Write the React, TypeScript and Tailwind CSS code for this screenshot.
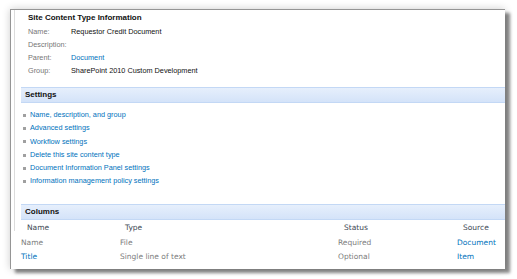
const font = "font-['Liberation_Sans',Arial,sans-serif]";
const tableFont = "font-['DejaVu_Sans',Verdana,sans-serif]";

const info = [
  { label: "Name:", value: "Requestor Credit Document" },
  { label: "Description:", value: "" },
  { label: "Parent:", value: "Document", link: true },
  { label: "Group:", value: "SharePoint 2010 Custom Development" },
];

const settings = [
  "Name, description, and group",
  "Advanced settings",
  "Workflow settings",
  "Delete this site content type",
  "Document Information Panel settings",
  "Information management policy settings",
];

const columns = [
  { name: "Name", nameLink: false, type: "File", status: "Required", source: "Document" },
  { name: "Title", nameLink: true, type: "Single line of text", status: "Optional", source: "Item" },
];

function Band({ title }: { title: string }) {
  return (
    <div className="h-[16px] flex items-center pl-[4px] border-y border-[#c3d8f5] bg-gradient-to-b from-[#e6effc] to-[#d4e3f9]">
      <span className="text-[8px] font-bold text-[#111]">{title}</span>
    </div>
  );
}

export default function App() {
  return (
    <div className={`w-[517px] h-[279px] bg-white overflow-hidden pt-[9px] pl-[10px] ${font}`}>
      <div className="w-[495px] h-[260px] bg-white border-l-[1.5px] border-t border-[#959595] shadow-[5px_4px_3px_rgba(0,0,0,0.45),0_0_8px_rgba(0,0,0,0.2)] flex">
        <div className="w-[4px] h-[221px] shrink-0 border-r border-[#dcdcdc]" />
        <div className="flex-1 pl-[6px]">
          <div className="mt-[1px] h-[13px] flex items-center pl-[7px] text-[8px] font-bold text-[#111]">
            Site Content Type Information
          </div>
          <div className="mt-[2px]">
            {info.map((r) => (
              <div key={r.label} className="h-[13px] flex items-center pl-[7px] text-[7.3px]">
                <span className="w-[43px] text-[#767676]">{r.label}</span>
                <span className={r.link ? "text-[#0072bc]" : "text-[#111]"}>{r.value}</span>
              </div>
            ))}
          </div>
          <div className="mt-[9px]">
            <Band title="Settings" />
          </div>
          <div className="mt-[6px]">
            {settings.map((s) => (
              <div key={s} className="h-[13.2px] flex items-center pl-[2px] text-[7.3px]">
                <span className="w-[3px] h-[3px] bg-[#a0a0a0] mr-[4px]" />
                <span className="text-[#0072bc]">{s}</span>
              </div>
            ))}
          </div>
          <div className="mt-[16px]">
            <Band title="Columns" />
          </div>
          <div className={`${tableFont} text-[7.5px]`}>
            <div className="h-[15px] flex items-center text-[#3e4955]">
              <span className="w-[99px] shrink-0 pl-[6px]">Name</span>
              <span className="w-[218px] shrink-0 pl-[5px]">Type</span>
              <span className="w-[119px] shrink-0 pl-[6px]">Status</span>
              <span className="pl-[6px]">Source</span>
            </div>
            {columns.map((c) => (
              <div key={c.name} className="h-[14px] flex items-center text-[#7c7c7c]">
                <span className={`w-[99px] shrink-0 ${c.nameLink ? "text-[#0072bc]" : ""}`}>{c.name}</span>
                <span className="w-[218px] shrink-0">{c.type}</span>
                <span className="w-[119px] shrink-0">{c.status}</span>
                <span className="text-[#0072bc]">{c.source}</span>
              </div>
            ))}
          </div>
        </div>
      </div>
    </div>
  );
}
